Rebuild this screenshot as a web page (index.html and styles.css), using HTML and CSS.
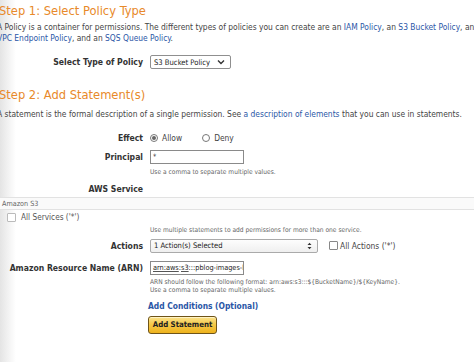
FILE: index.html
```html
<!DOCTYPE html>
<html>
<head>
<meta charset="utf-8">
<link rel="stylesheet" href="styles.css">
</head>
<body>
<div class="page">
  <h1 class="step">Step 1: Select Policy Type</h1>
  <p class="intro">A Policy is a container for permissions. The different types of policies you can create are an <a>IAM Policy</a>, an <a>S3 Bucket Policy</a>, an<br><a>VPC Endpoint Policy</a>, and an <a>SQS Queue Policy</a>.</p>

  <div class="row r-type">
    <div class="label">Select Type of Policy</div>
    <div class="field">
      <div class="select sel-type"><span>S3 Bucket Policy</span>
        <svg class="chev" width="8" height="6" viewBox="0 0 8 6"><path d="M1 1.5 L4 4.5 L7 1.5" fill="none" stroke="#333" stroke-width="1.4"/></svg>
      </div>
    </div>
  </div>

  <h1 class="step step2">Step 2: Add Statement(s)</h1>
  <p class="intro intro2">A statement is the formal description of a single permission. See <a>a description of elements</a> that you can use in statements.</p>

  <div class="row r-effect">
    <div class="label">Effect</div>
    <div class="field radios">
      <span class="radio on"></span><span class="rtext">Allow</span>
      <span class="radio deny"></span><span class="rtext">Deny</span>
    </div>
  </div>

  <div class="row r-principal">
    <div class="label">Principal</div>
    <div class="field"><div class="input in-principal">*</div></div>
  </div>
  <div class="row hint-row">
    <div class="label"></div>
    <div class="field hint">Use a comma to separate multiple values.</div>
  </div>

  <div class="row r-aws">
    <div class="label">AWS Service</div>
    <div class="field"></div>
  </div>
  <div class="svc-bar">Amazon S3</div>
  <div class="all-svc"><span class="check"></span>All Services ('*')</div>
  <div class="row hint-row2">
    <div class="label"></div>
    <div class="field hint">Use multiple statements to add permissions for more than one service.</div>
  </div>

  <div class="row r-actions">
    <div class="label">Actions</div>
    <div class="field actions">
      <div class="select sel-actions"><span>1 Action(s) Selected</span>
        <svg class="updown" width="5" height="8" viewBox="0 0 5 8"><path d="M0.5 3 L2.5 0.8 L4.5 3 Z M0.5 5 L2.5 7.2 L4.5 5 Z" fill="#333"/></svg>
      </div>
      <span class="check"></span><span class="alltext">All Actions ('*')</span>
    </div>
  </div>

  <div class="row r-arn">
    <div class="label">Amazon Resource Name (ARN)</div>
    <div class="field"><div class="input in-arn"><span class="sp">arn:aws</span>:<span class="sp">s3</span>:::pblog-images-l</div></div>
  </div>
  <div class="row hint-row3">
    <div class="label"></div>
    <div class="field hint">ARN should follow the following format: arn:aws:s3:::${BucketName}/${KeyName}.<br>Use a comma to separate multiple values.</div>
  </div>

  <div class="row r-cond">
    <div class="label"></div>
    <div class="field"><a class="cond">Add Conditions (Optional)</a></div>
  </div>
  <div class="row r-btn">
    <div class="label"></div>
    <div class="field"><button class="btn">Add Statement</button></div>
  </div>
</div>
</body>
</html>
```
FILE: styles.css
```css
html, body {
  margin: 0;
  padding: 0;
}
body {
  width: 474px;
  height: 362px;
  overflow: hidden;
  background: linear-gradient(to right, #e4e4e4 0px, #f2f2f2 8px, #ffffff 16px);
  font-family: "DejaVu Sans", Verdana, sans-serif;
  font-stretch: condensed;
  color: #444;
}
.page {
  position: relative;
}
a {
  color: #2a56a6;
}
.step {
  margin: 0;
  padding: 2px 0 0 0;
  height: 18px;
  font-size: 12.8px;
  font-weight: normal;
  color: #e8892a;
  line-height: 18px;
  margin-left: -1px;
}
.step2 {
  margin-top: 17px;
  padding-top: 0;
}
.intro {
  margin: 2px 0 0 -3px;
  font-size: 8.4px;
  line-height: 10.5px;
  white-space: nowrap;
}
.intro2 { margin-top: 5px; }
.row {
  display: grid;
  grid-template-columns: 143px 1fr;
  column-gap: 7px;
  align-items: center;
}
.label {
  text-align: right;
  font-weight: bold;
  font-size: 8.6px;
  color: #333;
  white-space: nowrap;
}
.field {
  font-size: 8px;
}
.r-type { margin-top: 12px; height: 14px; }
.select {
  box-sizing: border-box;
  height: 14px;
  border: 1px solid #8f8f8f;
  border-radius: 2px;
  background: #fff;
  display: flex;
  align-items: center;
  padding: 0 5px 0 3px;
  font-size: 7.6px;
  color: #222;
  justify-content: space-between;
}
.sel-type { width: 81px; }
.r-effect { margin-top: 11px; height: 14px; }
.radios { display: flex; align-items: center; }
.radio {
  box-sizing: border-box;
  width: 8px;
  height: 8px;
  border: 1px solid #777;
  border-radius: 50%;
  background: #fff;
  position: relative;
  margin-left: 0;
}
.radio.on::after {
  content: "";
  position: absolute;
  left: 1px; top: 1px;
  width: 4px; height: 4px;
  border-radius: 50%;
  background: #666;
}
.radio.deny { margin-left: 20px; }
.rtext { margin-left: 4px; font-size: 8.4px; }
.r-principal { margin-top: 5px; height: 14px; }
.input {
  box-sizing: border-box;
  height: 14px;
  width: 94px;
  border: 1px solid #8a8a8a;
  background: #fff;
  font-size: 7.3px;
  padding: 0 2px;
  line-height: 12px;
  color: #222;
  white-space: nowrap;
  overflow: hidden;
}
.hint {
  font-size: 6.6px;
  color: #666;
  line-height: 8.5px;
}
.hint-row { margin-top: 4px; }
.r-aws { margin-top: 7px; height: 12px; }
.svc-bar {
  margin-top: 2px;
  box-sizing: border-box;
  height: 13px;
  border-top: 1px solid #e2e2e2;
  border-bottom: 1px solid #e2e2e2;
  background: #fafafa;
  font-size: 7.2px;
  color: #666;
  line-height: 11px;
  padding-left: 2px;
}
.all-svc {
  margin-top: 1px;
  margin-left: 7px;
  display: flex;
  align-items: center;
  font-size: 8.2px;
  color: #555;
  height: 12px;
}
.all-svc .check { margin-right: 5px; border-color: #bbb; }
.check {
  box-sizing: border-box;
  display: inline-block;
  width: 9px;
  height: 9px;
  border: 1px solid #888;
  border-radius: 1px;
  background: #fff;
}
.hint-row2 { margin-top: 3px; }
.r-actions { margin-top: 4px; height: 14px; }
.actions { display: flex; align-items: center; }
.sel-actions {
  width: 168px;
  background: linear-gradient(#fdfdfd, #efefef);
  border-color: #aaa;
  padding-right: 5px;
}
.actions .check { margin-left: 11px; }
.alltext { margin-left: 2px; font-size: 8.4px; }
.r-arn { margin-top: 8px; height: 14px; }
.in-arn { width: 94px; }
.sp {
  text-decoration: underline;
  text-decoration-color: #555;
}
.hint-row3 { margin-top: 3px; }
.r-cond { margin-top: 5px; height: 12px; }
.cond {
  font-weight: bold;
  font-size: 8.4px;
  color: #2a56a6;
  margin-left: -2px;
}
.r-btn { margin-top: 4px; }
.btn {
  margin-left: -2px;
  box-sizing: border-box;
  width: 69px;
  height: 18px;
  border: 1px solid #6f5418;
  border-radius: 3px;
  background: linear-gradient(#fbe38e 0%, #f5c94a 45%, #eeb21c 100%);
  font-family: "DejaVu Sans", Verdana, sans-serif;
  font-stretch: condensed;
  font-weight: bold;
  font-size: 7.8px;
  color: #222;
  padding: 0;
  box-shadow: inset 0 1px 0 #fff3c4;
}
```
